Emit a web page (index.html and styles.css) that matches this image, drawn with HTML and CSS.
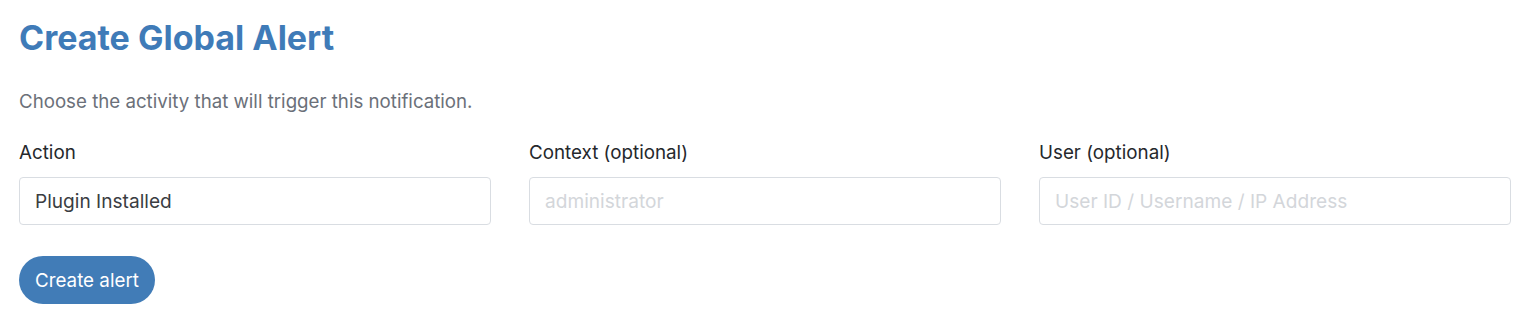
FILE: index.html
```html
<!DOCTYPE html>
<html>
<head>
<meta charset="utf-8">
<link rel="stylesheet" href="styles.css">
</head>
<body>
<div class="page">
  <h1 class="title">Create Global Alert</h1>
  <p class="intro">Choose the activity that will trigger this notification.</p>
  <div class="fields">
    <label class="field">
      <span class="label">Action</span>
      <input class="input" type="text" value="Plugin Installed">
    </label>
    <label class="field">
      <span class="label">Context (optional)</span>
      <input class="input" type="text" placeholder="administrator">
    </label>
    <label class="field">
      <span class="label">User (optional)</span>
      <input class="input" type="text" placeholder="User ID / Username / IP Address">
    </label>
  </div>
  <button class="btn" type="button">Create alert</button>
</div>
</body>
</html>
```

FILE: styles.css
```css
html, body {
  margin: 0;
  background: #ffffff;
}
.page {
  padding: 18px 25px 0 19px;
  font-family: Inter, "Open Sans", sans-serif;
  display: flex;
  flex-direction: column;
  align-items: flex-start;
}
.title {
  margin: 0;
  font-size: 34px;
  line-height: 40px;
  font-weight: 700;
  color: #3f7bb8;
}
.intro {
  margin: 32px 0 0 0;
  font-size: 18.7px;
  line-height: 24px;
  color: #6b7079;
}
.fields {
  margin-top: 27px;
  display: grid;
  grid-template-columns: repeat(3, 472px);
  column-gap: 38px;
}
.field {
  display: flex;
  flex-direction: column;
}
.label {
  font-size: 18.8px;
  line-height: 24px;
  color: #25282c;
}
.input {
  margin-top: 12px;
  box-sizing: border-box;
  height: 48px;
  width: 100%;
  border: 1px solid #d9dde2;
  border-radius: 4px;
  padding: 0 15px;
  font-family: inherit;
  font-size: 19.1px;
  color: #3a3d42;
  background: #fff;
  outline: none;
}
.input::placeholder {
  color: #d3d6da;
}
.btn {
  margin-top: 31px;
  height: 48px;
  padding: 0 16px;
  border: none;
  border-radius: 24px;
  background: #417cb7;
  color: #ffffff;
  font-family: inherit;
  font-size: 18.8px;
  cursor: pointer;
}
```
